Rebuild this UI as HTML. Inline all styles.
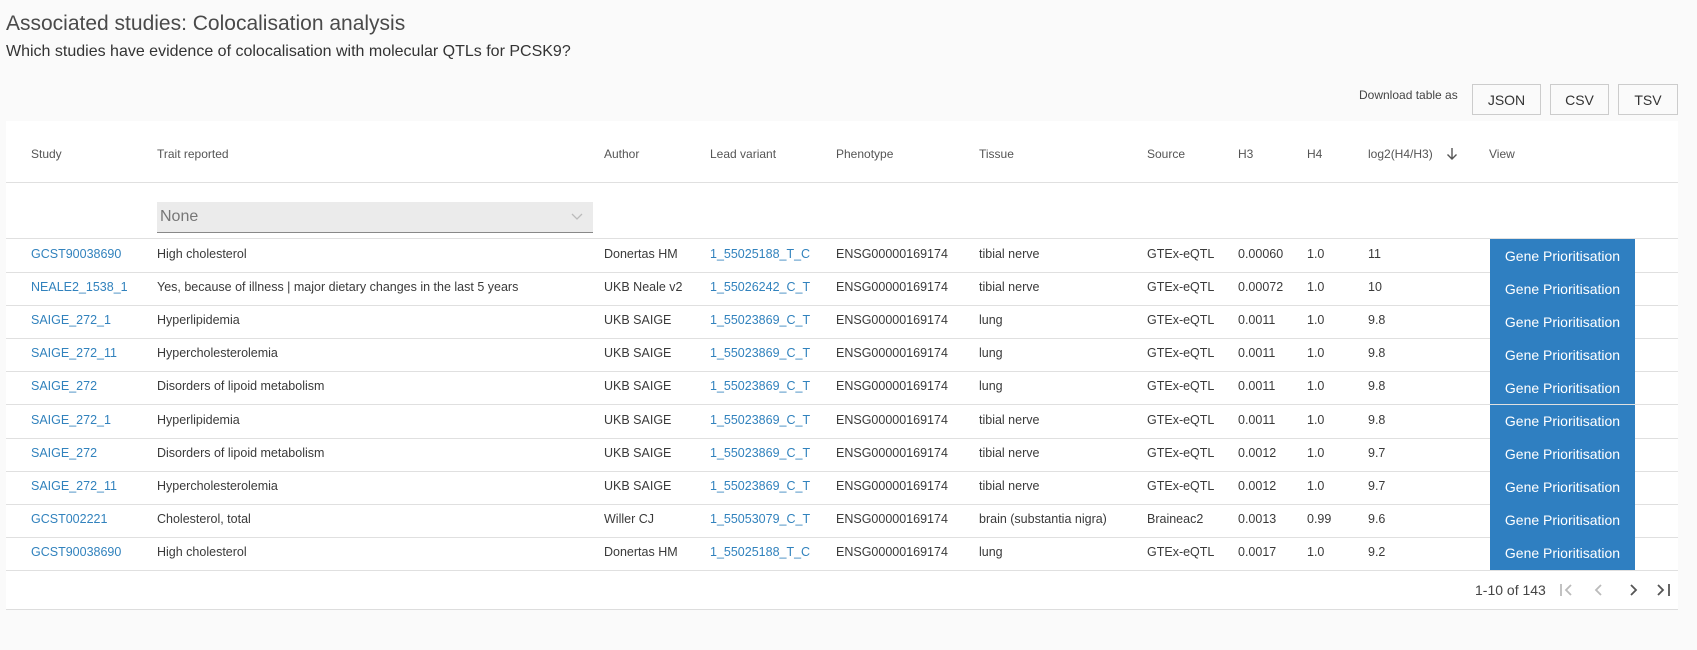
<!DOCTYPE html>
<html><head><meta charset="utf-8"><style>
*{box-sizing:border-box;margin:0;padding:0}
body{width:1697px;height:650px;background:#fafafa;font-family:"Liberation Sans",sans-serif;color:#333;position:relative;overflow:hidden}
.abs{position:absolute;white-space:nowrap}
h1{position:absolute;left:6px;top:12px;font-size:21px;font-weight:normal;color:#4a4a4a}
.sub{position:absolute;left:6px;top:43px;font-size:16px;color:#333}
.dl{left:1359px;top:88px;font-size:12px;color:#444}
.btn{position:absolute;top:84px;height:31px;border:1px solid #ccc;background:#fafafa;font-size:14px;color:#333;display:flex;align-items:center;justify-content:center}
.card{position:absolute;left:6px;top:121px;width:1672px;height:489px;background:#fff;border-bottom:1px solid #ddd}
.hl{position:absolute;left:0;width:1672px;height:1px;background:#e0e0e0}
.th{font-size:12px;color:#555;top:26px}
.td{font-size:12.5px;color:#3a3a3a}
.a{color:#3182bd}
.gp{position:absolute;left:1484px;width:145px;height:33px;background:#2f7fc1;color:#fff;font-size:14px;display:flex;align-items:center;justify-content:center}
.sel{position:absolute;left:151px;top:81px;width:436px;height:31px;background:#ebebeb;border-bottom:1px solid #888;font-size:16px;color:#777;padding:6px 3px}
svg{position:absolute}
</style></head><body>
<h1>Associated studies: Colocalisation analysis</h1>
<div class="sub">Which studies have evidence of colocalisation with molecular QTLs for PCSK9?</div>
<div class="abs dl">Download table as</div>
<div class="btn" style="left:1472px;width:69px">JSON</div>
<div class="btn" style="left:1550px;width:59px">CSV</div>
<div class="btn" style="left:1618px;width:60px">TSV</div>
<div class="card">
<div class="abs th" style="left:25px">Study</div>
<div class="abs th" style="left:151px">Trait reported</div>
<div class="abs th" style="left:598px">Author</div>
<div class="abs th" style="left:704px">Lead variant</div>
<div class="abs th" style="left:830px">Phenotype</div>
<div class="abs th" style="left:973px">Tissue</div>
<div class="abs th" style="left:1141px">Source</div>
<div class="abs th" style="left:1232px">H3</div>
<div class="abs th" style="left:1301px">H4</div>
<div class="abs th" style="left:1362px">log2(H4/H3)</div>
<svg style="left:1440px;top:26px" width="12" height="14" viewBox="0 0 12 14"><path d="M6 1V12M1.5 7.5L6 12L10.5 7.5" stroke="#555" stroke-width="1.4" fill="none"/></svg>
<div class="abs th" style="left:1483px">View</div>
<div class="hl" style="top:61px"></div>
<div class="sel">None<svg style="right:10px;top:11px" width="12" height="8" viewBox="0 0 12 8"><path d="M1 1L6 6L11 1" stroke="#bbb" stroke-width="1.3" fill="none"/></svg></div>
<div class="hl" style="top:117px"></div>
<div id="rows"></div>
<div class="abs td" style="left:1469px;top:461px;font-size:14px;color:#444">1-10 of 143</div>
<svg style="left:1553px;top:461px" width="16" height="16" viewBox="0 0 16 16"><path d="M2 2V14M12 3L7 8L12 13" stroke="#bbb" stroke-width="1.8" fill="none"/></svg>
<svg style="left:1585px;top:461px" width="16" height="16" viewBox="0 0 16 16"><path d="M10 3L5 8L10 13" stroke="#bbb" stroke-width="1.8" fill="none"/></svg>
<svg style="left:1619px;top:461px" width="16" height="16" viewBox="0 0 16 16"><path d="M6 3L11 8L6 13" stroke="#555" stroke-width="1.8" fill="none"/></svg>
<svg style="left:1650px;top:461px" width="16" height="16" viewBox="0 0 16 16"><path d="M2 3L7 8L2 13M13 2V14" stroke="#555" stroke-width="1.8" fill="none"/></svg>
</div>
<script>
var d=[["GCST90038690","High cholesterol","Donertas HM","1_55025188_T_C","tibial nerve","GTEx-eQTL","0.00060","1.0","11"],
["NEALE2_1538_1","Yes, because of illness | major dietary changes in the last 5 years","UKB Neale v2","1_55026242_C_T","tibial nerve","GTEx-eQTL","0.00072","1.0","10"],
["SAIGE_272_1","Hyperlipidemia","UKB SAIGE","1_55023869_C_T","lung","GTEx-eQTL","0.0011","1.0","9.8"],
["SAIGE_272_11","Hypercholesterolemia","UKB SAIGE","1_55023869_C_T","lung","GTEx-eQTL","0.0011","1.0","9.8"],
["SAIGE_272","Disorders of lipoid metabolism","UKB SAIGE","1_55023869_C_T","lung","GTEx-eQTL","0.0011","1.0","9.8"],
["SAIGE_272_1","Hyperlipidemia","UKB SAIGE","1_55023869_C_T","tibial nerve","GTEx-eQTL","0.0011","1.0","9.8"],
["SAIGE_272","Disorders of lipoid metabolism","UKB SAIGE","1_55023869_C_T","tibial nerve","GTEx-eQTL","0.0012","1.0","9.7"],
["SAIGE_272_11","Hypercholesterolemia","UKB SAIGE","1_55023869_C_T","tibial nerve","GTEx-eQTL","0.0012","1.0","9.7"],
["GCST002221","Cholesterol, total","Willer CJ","1_55053079_C_T","brain (substantia nigra)","Braineac2","0.0013","0.99","9.6"],
["GCST90038690","High cholesterol","Donertas HM","1_55025188_T_C","lung","GTEx-eQTL","0.0017","1.0","9.2"]];
var x=[25,151,598,704,973,1141,1232,1301,1362],h="";
d.forEach(function(r,i){var t=118+i*33.1;
r.forEach(function(c,j){h+='<div class="abs td'+(j==0||j==3?' a':'')+'" style="left:'+x[j]+'px;top:'+(t+8)+'px">'+c+'</div>';});
h+='<div class="abs td" style="left:830px;top:'+(t+8)+'px">ENSG00000169174</div>';
h+='<div class="gp" style="top:'+t+'px">Gene Prioritisation</div>';
h+='<div class="hl" style="top:'+(t+33)+'px"></div>';});
document.getElementById("rows").innerHTML=h;
</script>
</body></html>
